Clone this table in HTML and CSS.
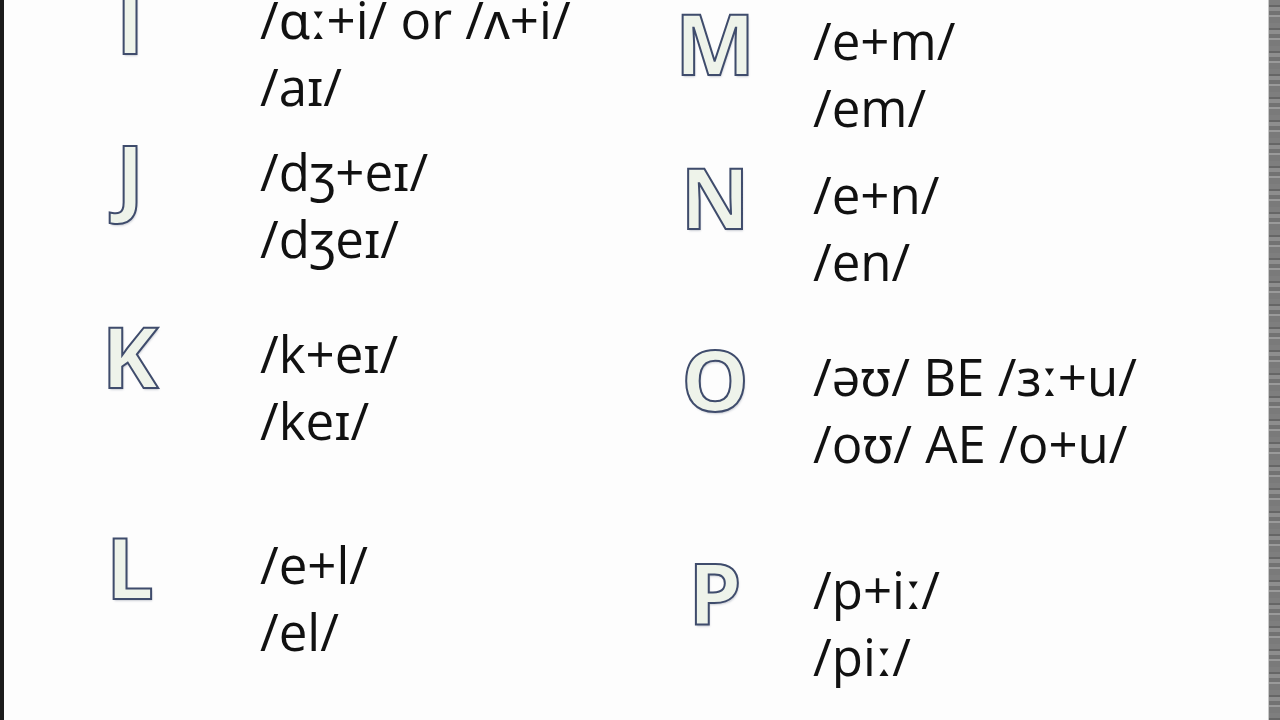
FILE: index.html
```html
<!DOCTYPE html>
<html lang="en">
<head>
<meta charset="utf-8">
<title>Alphabet pronunciation I–P</title>
<link rel="stylesheet" href="styles.css">
</head>
<body>
<div class="screen">
  <main class="slide">
    <section class="col col-left">
      <div class="row row-i">
        <div class="letter">I</div>
        <div class="ipa"><div>/ɑː+i/ or /ʌ+i/</div><div>/aɪ/</div></div>
      </div>
      <div class="row row-j">
        <div class="letter">J</div>
        <div class="ipa"><div>/dʒ+eɪ/</div><div>/dʒeɪ/</div></div>
      </div>
      <div class="row row-k">
        <div class="letter">K</div>
        <div class="ipa"><div>/k+eɪ/</div><div>/keɪ/</div></div>
      </div>
      <div class="row row-l">
        <div class="letter">L</div>
        <div class="ipa"><div>/e+l/</div><div>/el/</div></div>
      </div>
    </section>
    <section class="col col-right">
      <div class="row row-m">
        <div class="letter">M</div>
        <div class="ipa"><div>/e+m/</div><div>/em/</div></div>
      </div>
      <div class="row row-n">
        <div class="letter">N</div>
        <div class="ipa"><div>/e+n/</div><div>/en/</div></div>
      </div>
      <div class="row row-o">
        <div class="letter">O</div>
        <div class="ipa"><div>/əʊ/ BE /ɜː+u/</div><div>/oʊ/ AE /o+u/</div></div>
      </div>
      <div class="row row-p">
        <div class="letter">P</div>
        <div class="ipa"><div>/p+iː/</div><div>/piː/</div></div>
      </div>
    </section>
  </main>
  <div class="strip"></div>
</div>
</body>
</html>
```

FILE: styles.css
```css
html, body {
  margin: 0;
  padding: 0;
  height: 100%;
  overflow: hidden;
  background: #fdfdfd;
}

.screen {
  display: flex;
  width: 1280px;
  height: 720px;
  overflow: hidden;
}

.slide {
  flex: 1;
  display: grid;
  grid-template-columns: 651px 1fr;
  border-left: 4px solid #1c1c1c;
  background: #fdfdfd;
  font-family: "Open Sans", "Noto Sans", "DejaVu Sans", sans-serif;
  color: #111;
}

.strip {
  width: 11px;
  background: repeating-linear-gradient(180deg,
    #7e7e7e 0px, #7e7e7e 5px,
    #666 5px, #666 7px,
    #8e8e8e 7px, #8e8e8e 11px,
    #727272 11px, #727272 15px,
    #9a9a9a 15px, #9a9a9a 17px,
    #7a7a7a 17px, #7a7a7a 23px);
  border-left: 1px solid #c8c8c8;
}

.col {
  display: flex;
  flex-direction: column;
}

.col-left {
  padding-left: 66px;
  margin-top: -14px;
}

.col-right {
  padding-top: 7px;
}

.row {
  display: flex;
  align-items: flex-start;
}

.col-left .row { gap: 70px; }
.col-right .row { gap: 38px; }

.row-j { margin-top: 18px; }
.row-k { margin-top: 48px; }
.row-l { margin-top: 77px; }
.row-n { margin-top: 20px; }
.row-o { margin-top: 48px; }
.row-p { margin-top: 79px; }

.letter {
  width: 120px;
  height: 67px;
  display: flex;
  align-items: center;
  justify-content: center;
  font-size: 85px;
  font-weight: 700;
  line-height: 1;
  color: #eef3ea;
  -webkit-text-stroke: 2px #3f4c6c;
  text-shadow: 1px 2px 2px rgba(60, 70, 100, 0.25);
  padding-top: 4px;
  box-sizing: border-box;
}

.ipa {
  font-size: 51px;
  line-height: 67px;
  white-space: nowrap;
}
```
